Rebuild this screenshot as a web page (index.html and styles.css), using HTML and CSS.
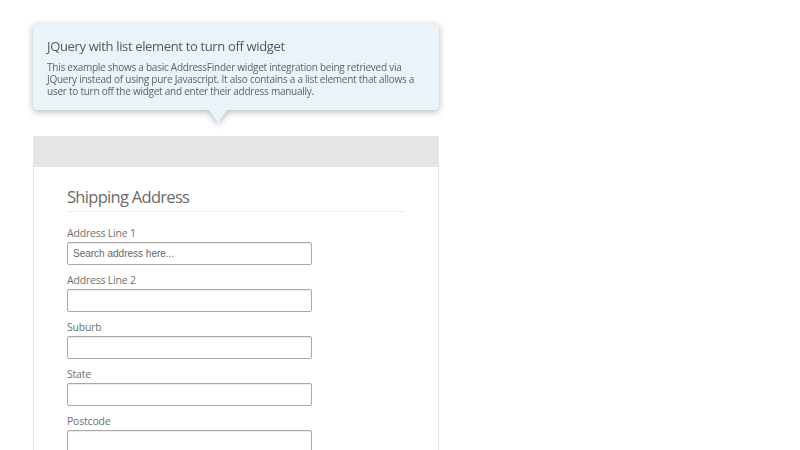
FILE: index.html
```html
<!DOCTYPE html>
<html>
<head>
<meta charset="utf-8">
<link rel="stylesheet" href="styles.css">
</head>
<body>
<div class="page">
  <div class="tip">
    <h1 class="tip-title">JQuery with list element to turn off widget</h1>
    <p class="tip-text">This example shows a basic AddressFinder widget integration being retrieved via JQuery instead of using pure Javascript. It also contains a a list element that allows a user to turn off the widget and enter their address manually.</p>
  </div>
  <div class="card">
    <div class="card-bar"></div>
    <div class="card-body">
      <h2 class="section-title">Shipping Address</h2>
      <div class="field">
        <label class="field-label">Address Line 1</label>
        <input class="field-input" type="text" placeholder="Search address here...">
      </div>
      <div class="field">
        <label class="field-label">Address Line 2</label>
        <input class="field-input" type="text">
      </div>
      <div class="field">
        <label class="field-label">Suburb</label>
        <input class="field-input" type="text">
      </div>
      <div class="field">
        <label class="field-label">State</label>
        <input class="field-input" type="text">
      </div>
      <div class="field">
        <label class="field-label">Postcode</label>
        <input class="field-input" type="text">
      </div>
    </div>
  </div>
</div>
</body>
</html>
```
FILE: styles.css
```css
html, body {
  margin: 0;
  padding: 0;
  background: #ffffff;
  font-family: "Open Sans", "Noto Sans", sans-serif;
}
.page {
  padding: 23px 0 0 33px;
  width: 406px;
}
.tip {
  position: relative;
  box-sizing: border-box;
  height: 87px;
  padding: 14px 14px 0 14px;
  background: #e9f3f8;
  border-radius: 4px;
  filter: drop-shadow(0 2px 3px rgba(0, 0, 0, 0.28));
}
.tip::after {
  content: "";
  position: absolute;
  left: 175px;
  top: 86px;
  width: 20px;
  height: 14px;
  background: #e9f3f8;
  clip-path: polygon(0 0, 100% 0, 50% 100%);
}
.tip-title {
  margin: 0 0 6px 0;
  font-size: 13px;
  line-height: 18px;
  font-weight: 400;
  letter-spacing: -0.35px;
  color: #4d5b66;
}
.tip-text {
  margin: 0;
  font-size: 10px;
  line-height: 12px;
  letter-spacing: -0.25px;
  color: #5f6469;
}
.card {
  margin-top: 26px;
  border: 1px solid #e6e6e6;
  border-top: 0;
}
.card-bar {
  height: 31px;
  background: #e6e6e6;
}
.card-body {
  padding: 18px 33px 0 33px;
}
.section-title {
  margin: 0;
  padding-bottom: 2px;
  font-size: 16.5px;
  line-height: 24px;
  font-weight: 400;
  letter-spacing: -0.7px;
  color: #6a6a6a;
  border-bottom: 1px solid #eeeeee;
}
.field {
  display: flex;
  flex-direction: column;
  align-items: flex-start;
  margin-top: 13px;
}
.field + .field {
  margin-top: 7px;
}
.field-label {
  font-size: 10.5px;
  line-height: 17px;
  letter-spacing: -0.2px;
  color: #707070;
}
.field-input {
  box-sizing: border-box;
  width: 245px;
  height: 23px;
  margin: 0;
  padding: 0 5px;
  border: 1px solid #a9a9a9;
  border-radius: 2px;
  box-shadow: inset 0 1px 1px rgba(0, 0, 0, 0.08);
  font-family: "Liberation Sans", Arial, sans-serif;
  font-size: 10px;
  color: #555;
  background: #fff;
}
.field-input::placeholder {
  color: #666;
}
```
